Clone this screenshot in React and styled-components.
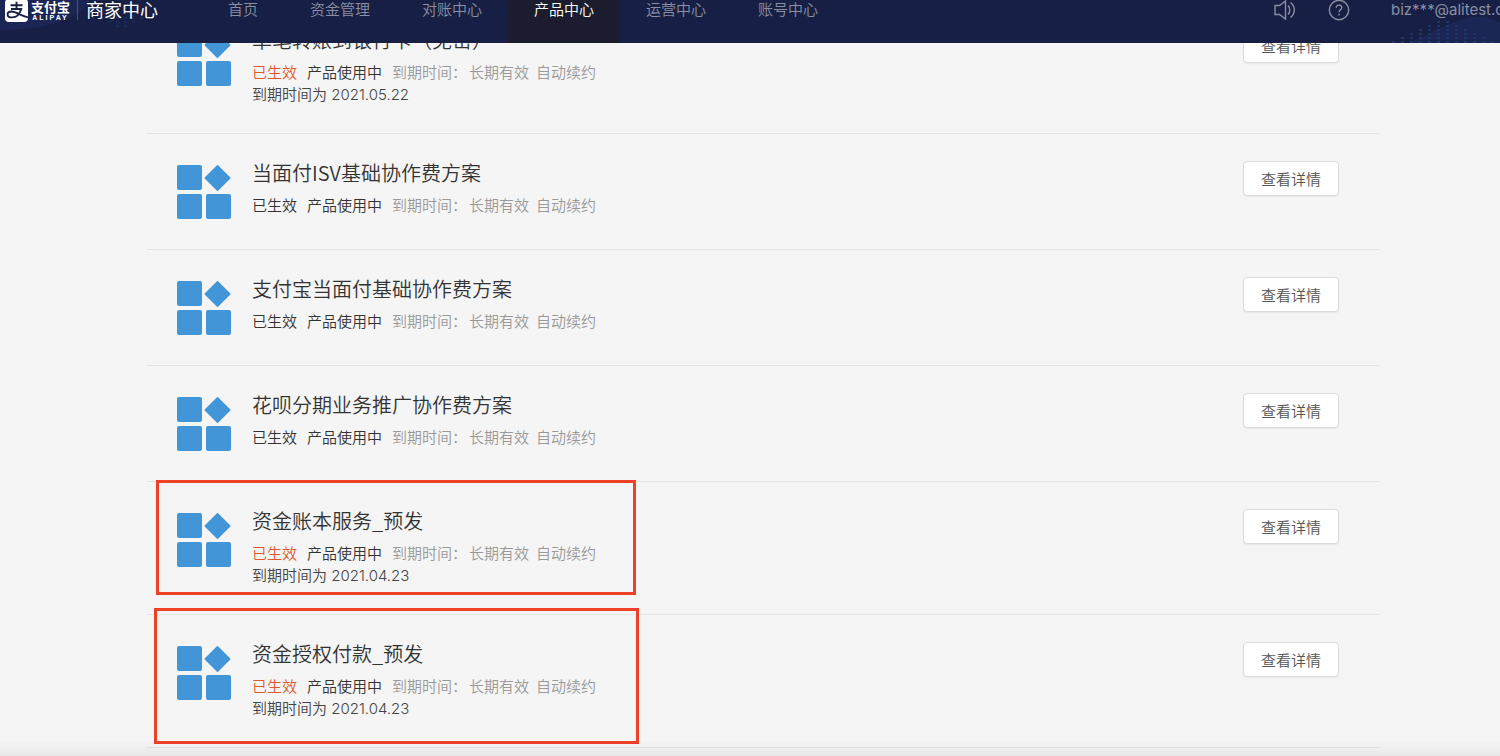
import React from "react";
import styled, { createGlobalStyle } from "styled-components";

const navItems = [
  { label: "首页" },
  { label: "资金管理" },
  { label: "对账中心" },
  { label: "产品中心", active: true },
  { label: "运营中心" },
  { label: "账号中心" },
];

const products = [
  { name: "单笔转账到银行卡（免密）", expire: "2021.05.22" },
  { name: "当面付ISV基础协作费方案" },
  { name: "支付宝当面付基础协作费方案" },
  { name: "花呗分期业务推广协作费方案" },
  { name: "资金账本服务_预发", expire: "2021.04.23", mark: "small" },
  { name: "资金授权付款_预发", expire: "2021.04.23", mark: "large" },
];

// bar heights (in dots) of the wave at the right end of the header
const waveBars = [1, 2, 3, 4, 5, 6, 6, 5, 4, 3, 2, 1];
// same, for the faint dots hanging under the site name
const dotBars = [1, 1, 2, 3, 3, 2, 1];

const Logo = () => (
  <LogoLink href="#" aria-label="支付宝">
    <svg width="23" height="22" viewBox="0 1 23 22" fill="none">
      <rect width="23" height="23" rx="4" fill="#fff" />
      <path
        d="M5.5 6.2H17.5M11.5 2.8V10M6 10H16.2C15.2 13.6 12.6 18.4 7.2 18.4C3.8 18.4 2.6 16.8 2.6 15.4C2.6 13.7 4.2 12.5 6.5 12.5C11 12.5 16 16.8 23 18.4"
        stroke="#171f45"
        strokeWidth="1.9"
      />
    </svg>
    <LogoText>
      <b>支付宝</b>
      <small>ALIPAY</small>
    </LogoText>
  </LogoLink>
);

const SoundIcon = () => (
  <svg width="22" height="20" viewBox="0 0 22 20" fill="none" stroke="currentColor" strokeWidth="1.4">
    <path d="M1 5.5H5.5L11.5 1V19L5.5 14.5H1Z" />
    <path d="M14 5.5C16.4 8 16.4 12 14 14.5" />
    <path d="M16.5 2.5C21.6 6.5 21.6 13.5 16.5 17.5" />
  </svg>
);

const HelpIcon = () => (
  <svg width="22" height="22" viewBox="0 0 22 22" fill="none" stroke="currentColor" strokeWidth="1.4">
    <circle cx="11" cy="11" r="9.7" />
    <path d="M8.2 8.8C8.2 5.2 13.8 5.2 13.8 8.6C13.8 10.6 11 10.8 11 13.2" />
    <path d="M11 14.8V16.4" />
  </svg>
);

const ProductIcon = () => (
  <IconSvg width="54" height="54" viewBox="0 0 54 54" fill="#4296d8" aria-hidden="true">
    <rect width="25" height="25" rx="2" />
    <rect y="29" width="25" height="25" rx="2" />
    <rect x="29" y="29" width="25" height="25" rx="2" />
    <rect x="31" y="3.5" width="19" height="19" rx="1.5" transform="rotate(45 40.5 13)" />
  </IconSvg>
);

const HeaderWave = () => (
  <WaveSvg width="120" height="43" viewBox="0 0 120 43" aria-hidden="true">
    <path d="M30 43C55 30 80 17 98 17C106 17 114 19 120 23V43Z" fill="#1c2655" />
    {waveBars.map((n, i) =>
      Array.from({ length: n }, (_, j) => (
        <rect key={`${i}-${j}`} x={12 + i * 9} y={41 - j * 4} width="3" height="2" fill="#1c3467" />
      ))
    )}
  </WaveSvg>
);

const HeaderDots = () => (
  <DotsSvg width="60" height="14" viewBox="0 0 60 14" aria-hidden="true">
    {dotBars.map((n, i) =>
      Array.from({ length: n }, (_, j) => (
        <rect key={`${i}-${j}`} x={i * 8} y={1 + j * 4} width="3" height="2" fill="#1a2a58" />
      ))
    )}
  </DotsSvg>
);

const ProductRow = ({ item }) => (
  <Row>
    {item.mark && <Mark $size={item.mark} />}
    <ProductIcon />
    <Info>
      <Title>{item.name}</Title>
      <Meta>
        <Status $warn={!!item.expire}>已生效</Status>
        <Usage>产品使用中</Usage>
        <Term>
          <span>到期时间：</span>
          <span>长期有效</span>
        </Term>
        <Renew>自动续约</Renew>
      </Meta>
      {item.expire && <Expire>到期时间为 {item.expire}</Expire>}
    </Info>
    <DetailButton type="button">查看详情</DetailButton>
  </Row>
);

const App = () => {
  return (
    <>
      <GlobalStyle />
      <Header>
        <HeaderGlow />
        <HeaderDots />
        <HeaderWave />
        <Logo />
        <SiteName>商家中心</SiteName>
        <Nav>
          {navItems.map((item) => (
            <NavLink key={item.label} href="#" $active={item.active}>
              {item.label}
            </NavLink>
          ))}
        </Nav>
        <Tools>
          <ToolButton type="button" aria-label="sound">
            <SoundIcon />
          </ToolButton>
          <ToolButton type="button" aria-label="help">
            <HelpIcon />
          </ToolButton>
          <Account href="#">biz***@alitest.com</Account>
        </Tools>
      </Header>
      <List>
        {products.map((item) => (
          <ProductRow key={item.name} item={item} />
        ))}
      </List>
      <BottomShade />
    </>
  );
};

const GlobalStyle = createGlobalStyle`
  * {
    box-sizing: border-box;
  }
  body {
    margin: 0;
    background: #f5f5f5;
    color: #333;
    font-family: "Noto Sans CJK SC", sans-serif;
    font-size: 15px;
    font-weight: 350;
    overflow-x: hidden;
  }
  button {
    font: inherit;
    cursor: pointer;
  }
  a {
    color: inherit;
    text-decoration: none;
  }
`;

const Header = styled.header`
  position: fixed;
  top: 0;
  left: 0;
  right: 0;
  z-index: 10;
  display: flex;
  height: 43px;
  padding-left: 5px;
  overflow: hidden;
  background: #171f45;
  color: #fff;
  line-height: 18px;
`;

const HeaderGlow = styled.div`
  position: absolute;
  left: -80px;
  top: -40px;
  width: 170px;
  height: 70px;
  border-radius: 50%;
  background: #1c2655;
`;

const WaveSvg = styled.svg`
  position: absolute;
  right: 0;
  bottom: 0;
`;

const DotsSvg = styled.svg`
  position: absolute;
  left: 92px;
  top: 16px;
`;

const LogoLink = styled.a`
  position: relative;
  display: flex;
  flex: none;
  gap: 3px;
  height: 22px;
`;

const LogoText = styled.span`
  display: flex;
  flex-direction: column;
  align-items: center;
  b {
    font-size: 13px;
    font-weight: 700;
    line-height: 14px;
  }
  small {
    font-family: "Liberation Sans", sans-serif;
    font-size: 7px;
    font-weight: 700;
    letter-spacing: 2px;
    line-height: 8px;
  }
`;

const SiteName = styled.span`
  position: relative;
  flex: none;
  width: 90px;
  height: 20px;
  margin-left: 7px;
  padding-left: 8px;
  border-left: 1px solid #4a5070;
  font-size: 18px;
  font-weight: 400;
  white-space: nowrap;
`;

const Nav = styled.nav`
  position: relative;
  display: flex;
  flex: none;
  margin-left: 35px;
`;

const NavLink = styled.a`
  padding: 0 26px;
  color: ${(props) => (props.$active ? "#fff" : "#8b8fa2")};
  background: ${(props) => (props.$active ? "#1b1d2e" : "transparent")};
`;

const Tools = styled.div`
  position: relative;
  display: flex;
  align-items: flex-start;
  flex: none;
  width: 226px;
  margin-left: auto;
`;

const ToolButton = styled.button`
  display: flex;
  align-items: center;
  flex: none;
  height: 20px;
  margin-right: 32px;
  padding: 0;
  border: 0;
  background: none;
  color: #8b8fa2;
`;

const Account = styled.a`
  margin-left: 9px;
  color: #8b8fa2;
  font-family: Inter, sans-serif;
  font-size: 15px;
  font-weight: 400;
  line-height: 20px;
`;

const List = styled.main`
  padding: 1px 121px 0 147px;
`;

const Row = styled.section`
  position: relative;
  display: flex;
  align-items: flex-start;
  padding: 23px 40px 27px 30px;
  border-bottom: 1px solid #e6e6e6;
`;

const IconSvg = styled.svg`
  flex: none;
  margin: 8px 21px 3px 0;
`;

const Info = styled.div`
  flex: 1;
`;

const Title = styled.h3`
  margin: 0 0 4px;
  font-size: 20px;
  font-weight: 350;
  line-height: 32px;
`;

const Meta = styled.div`
  display: flex;
  line-height: 23px;
`;

const Status = styled.span`
  margin-right: 10px;
  color: ${(props) => (props.$warn ? "#e0582b" : "#333")};
`;

const Usage = styled.span`
  margin-right: 10px;
`;

const Term = styled.span`
  display: flex;
  gap: 2px;
  margin-right: 7px;
  color: #999;
`;

const Renew = styled.span`
  color: #999;
`;

const Expire = styled.div`
  color: #444;
  font-family: Inter, "Noto Sans CJK SC", sans-serif;
  line-height: 23px;
`;

const DetailButton = styled.button`
  flex: none;
  width: 96px;
  height: 35px;
  margin-top: 4px;
  padding: 0;
  border: 1px solid #ddd;
  border-radius: 4px;
  background: #fff;
  box-shadow: 0 1px 2px rgba(0, 0, 0, 0.06);
  color: #555;
`;

const Mark = styled.div`
  position: absolute;
  top: ${(props) => (props.$size === "large" ? "-7px" : "-2px")};
  left: ${(props) => (props.$size === "large" ? "7px" : "9px")};
  width: ${(props) => (props.$size === "large" ? "485px" : "480px")};
  height: ${(props) => (props.$size === "large" ? "136px" : "115px")};
  border: 3px solid #ee4128;
  pointer-events: none;
`;

const BottomShade = styled.div`
  position: fixed;
  left: 0;
  right: 0;
  bottom: 0;
  height: 16px;
  background: linear-gradient(rgba(0, 0, 0, 0), rgba(0, 0, 0, 0.05));
  pointer-events: none;
`;

export default App;
